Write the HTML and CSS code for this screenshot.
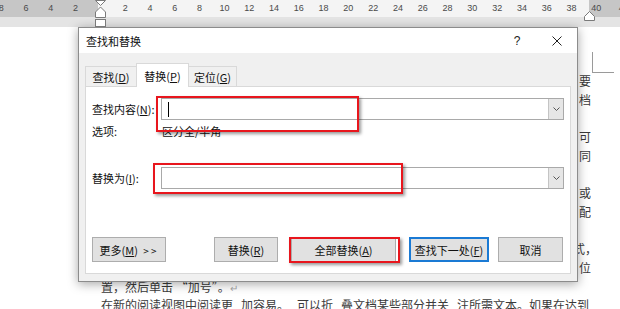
FILE: index.html
```html
<!DOCTYPE html>
<html lang="zh-CN">
<head>
<meta charset="UTF-8" />
<title>查找和替换</title>
<link rel="stylesheet" href="styles.css">
</head>
<body>

<!-- 标尺 -->
<div class="ruler">
  <div class="ruler-scale">
    <span>8</span><span>6</span><span>4</span><span>2</span><span></span>
    <span>2</span><span>4</span><span>6</span><span>8</span><span>10</span>
    <span>12</span><span>14</span><span>16</span><span>18</span><span>20</span>
    <span>22</span><span>24</span><span>26</span><span>28</span><span>30</span>
    <span>32</span><span>34</span><span>36</span><span>38</span><span>40</span><span>4</span>
  </div>
  <svg class="indent-left" width="11" height="27" viewBox="0 0 11 27">
    <path d="M0.5 0.5H10.5L5.5 5.5Z" fill="#fff" stroke="#7a7a7a"/>
    <path d="M5.5 7L10.5 12V17.5H0.5V12Z" fill="#fff" stroke="#7a7a7a"/>
    <rect x="0.5" y="19.5" width="10" height="7" fill="#fff" stroke="#7a7a7a"/>
  </svg>
  <svg class="indent-right" width="11" height="10" viewBox="0 0 11 10">
    <path d="M5.5 0.5L10.5 5.5V9.5H0.5V5.5Z" fill="#fff" stroke="#7a7a7a"/>
  </svg>
</div>
<div class="ruler-band"></div>

<!-- 文档正文：对话框外只露出行尾 -->
<div class="doc">
  <div class="ln r">要</div>
  <div class="ln r">档</div>
  <div class="ln"></div>
  <div class="ln r">可</div>
  <div class="ln r">同</div>
  <div class="ln"></div>
  <div class="ln r">或</div>
  <div class="ln r">配</div>
  <div class="ln"></div>
  <div class="ln r">式<span class="half">，</span></div>
  <div class="ln r">位</div>
  <div class="ln">置，然后单击 “加号”。<span class="pmark">↵</span></div>
  <div class="ln wide"><span>在新的阅读视图中阅读更</span><span>加容易。</span><span>可以折</span><span>叠文档某些部分并关</span><span>注所需文本。如果在达到</span></div>
</div>

<!-- 查找和替换 对话框 -->
<div class="dialog">
  <div class="dlg-title">
    <span class="dlg-name">查找和替换</span>
    <span class="dlg-btn">?</span>
    <span class="dlg-btn">
      <svg width="10" height="10" viewBox="0 0 10 10"><path d="M0.5 0.5L9.5 9.5M9.5 0.5L0.5 9.5" stroke="#222" stroke-width="1"/></svg>
    </span>
  </div>

  <div class="dlg-body">
    <div class="tabs">
      <div class="tab t-find">查找(<u>D</u>)</div>
      <div class="tab t-replace active">替换(<u>P</u>)</div>
      <div class="tab t-goto">定位(<u>G</u>)</div>
    </div>

    <div class="panel">
      <div class="row">
        <span class="lbl">查找内容(<u>N</u>):</span>
        <div class="combo">
          <span class="caret"></span>
          <span class="drop"><svg width="7" height="4" viewBox="0 0 7 4"><path d="M0.5 0.5L3.5 3.5L6.5 0.5" fill="none" stroke="#555"/></svg></span>
        </div>
      </div>
      <div class="row opts">
        <span class="lbl">选项:</span>
        <span class="opt-val">区分全/半角</span>
      </div>
      <div class="row replace">
        <span class="lbl">替换为(<u>I</u>):</span>
        <div class="combo">
          <span class="drop"><svg width="7" height="4" viewBox="0 0 7 4"><path d="M0.5 0.5L3.5 3.5L6.5 0.5" fill="none" stroke="#555"/></svg></span>
        </div>
      </div>

      <div class="buttons">
        <button class="btn b-more" type="button">更多(<u>M</u>) <span class="arrows">&gt;&gt;</span></button>
        <button class="btn b-replace" type="button">替换(<u>R</u>)</button>
        <button class="btn b-all" type="button">全部替换(<u>A</u>)</button>
        <button class="btn b-next" type="button">查找下一处(<u>F</u>)</button>
        <button class="btn b-cancel" type="button">取消</button>
      </div>
    </div>
  </div>

  <!-- 红色标注框 -->
  <div class="mark mark-find"></div>
  <div class="mark mark-replace"></div>
  <div class="mark mark-all"></div>
</div>

</body>
</html>
```

FILE: styles.css
```css
* {
  box-sizing: border-box;
}

body {
  margin: 0;
  width: 620px;
  height: 309px;
  overflow: hidden;
  position: relative;
  background: #fff;
  font-family: "Noto Sans CJK SC", "Liberation Sans", sans-serif;
}

/* 标尺 */
.ruler {
  position: relative;
  z-index: 1;
  height: 17px;
  background: linear-gradient(to right, #c6c6c6 0 98px, #f4f4f4 98px 589px, #c6c6c6 589px);
}
.ruler-scale {
  display: flex;
  margin-left: -11.2px;
  font: 9px/17px "Liberation Sans", sans-serif;
  color: #4a4a4a;
}
.ruler-scale span {
  flex: none;
  width: 24.8px;
  text-align: center;
}
.indent-left {
  position: absolute;
  left: 95px;
  top: 0;
}
.indent-right {
  position: absolute;
  left: 584px;
  top: 11px;
}
.ruler-band {
  height: 10px;
  background: #e4e4e4;
}

/* 文档 */
.doc {
  position: relative;
  margin-left: 101px;
  width: 490px;
  padding-top: 45px;
  font-size: 12px;
  line-height: 18.7px;
  color: #3a3a3a;
}
.doc::before {
  content: "";
  position: absolute;
  left: 491px;
  top: 25px;
  width: 21px;
  height: 20px;
  border-left: 1px solid #9a9a9a;
  border-bottom: 1px solid #9a9a9a;
}
.ln {
  height: 18.7px;
  white-space: nowrap;
  overflow: hidden;
}
.ln.r {
  text-align: right;
}
.half {
  display: inline-block;
  width: 6px;
  overflow: hidden;
  vertical-align: top;
}
.wide span {
  margin-right: 8px;
}
.wide span:last-child {
  margin-right: 0;
}
.pmark {
  color: #a8a8a8;
  font-size: 10px;
}

/* 对话框 */
.dialog {
  position: absolute;
  left: 78px;
  top: 27px;
  width: 500px;
  height: 255px;
  border: 1px solid #8c8c8c;
  background: #f0f0f0;
  box-shadow: 0 2px 10px rgb(0 0 0 / 0.35);
  display: flex;
  flex-direction: column;
  font-size: 11px;
  color: #111;
}
.dlg-title {
  height: 25px;
  background: #fff;
  display: flex;
  align-items: center;
}
.dlg-name {
  flex: 1;
  padding-left: 7px;
}
.dlg-btn {
  width: 40px;
  height: 25px;
  display: flex;
  align-items: center;
  justify-content: center;
  font: 12px "Liberation Sans", sans-serif;
  color: #222;
}

.dlg-body {
  flex: 1;
  display: flex;
  flex-direction: column;
  padding: 10px 6px 7px 6px;
}

.tabs {
  display: flex;
  align-items: flex-end;
  height: 23px;
  position: relative;
  z-index: 1;
}
.tab {
  height: 20px;
  margin-right: -1px;
  border: 1px solid #d9d9d9;
  border-bottom: none;
  display: flex;
  align-items: center;
  justify-content: center;
  background: #f0f0f0;
}
.tab.active {
  height: 24px;
  margin-bottom: -1px;
  background: #fff;
  position: relative;
  z-index: 1;
}
.t-find { width: 52px; }
.t-replace { width: 53px; }
.t-goto { width: 49px; }

.panel {
  flex: 1;
  background: #fff;
  border: 1px solid #d9d9d9;
  padding: 11px 6px 0 6px;
}

.row {
  display: flex;
  align-items: center;
  height: 22px;
}
.lbl {
  flex: none;
  width: 69px;
}
.opts {
  height: 18px;
  margin-top: 2px;
}
.opt-val {
  padding-left: 1px;
}
.replace {
  margin-top: 27px;
}

.combo {
  flex: 1;
  height: 22px;
  border: 1px solid #a9a9a9;
  background: #fff;
  display: flex;
  align-items: center;
}
.caret {
  width: 1px;
  height: 15px;
  margin-left: 6px;
  background: #000;
}
.drop {
  margin-left: auto;
  width: 15px;
  height: 100%;
  background: #e6e6e6;
  border-left: 1px solid #c4c4c4;
  display: flex;
  align-items: center;
  justify-content: center;
}

.buttons {
  display: flex;
  margin-top: 48px;
}
.btn {
  height: 25px;
  padding: 0;
  border: 1px solid #adadad;
  background: #e1e1e1;
  font: inherit;
  color: #111;
  text-align: center;
}
.b-more { width: 74px; }
.b-replace { width: 64px; margin-left: 48px; }
.b-all { width: 105px; margin-left: 13px; }
.b-next {
  width: 80px;
  margin-left: 13px;
  border: 2px solid #1a7ad4;
}
.b-cancel { width: 65px; margin-left: 9px; }
.arrows {
  letter-spacing: 2px;
  margin-left: 3px;
  font-size: 10px;
}

/* 红色标注 */
.mark {
  position: absolute;
  border: 2px solid #e8161d;
  box-shadow: 2px 2px 3px rgb(0 0 0 / 0.4);
}
.mark-find {
  left: 77px;
  top: 68px;
  width: 203px;
  height: 36px;
}
.mark-replace {
  left: 74px;
  top: 135px;
  width: 250px;
  height: 31px;
}
.mark-all {
  left: 210px;
  top: 209px;
  width: 111px;
  height: 26px;
}
```
